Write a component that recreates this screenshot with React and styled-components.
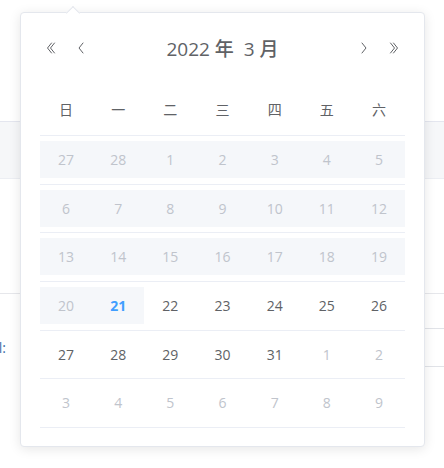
import React from "react";
import styled, { createGlobalStyle } from "styled-components";

const GlobalStyle = createGlobalStyle`
  html, body {
    margin: 0;
    background: #fff;
  }
  body {
    font-family: "Open Sans", "Noto Sans CJK SC", sans-serif;
    color: #606266;
  }
`;

const Page = styled.div`
  position: relative;
  width: 444px;
  height: 468px;
  overflow: hidden;
`;

const TopSpace = styled.div`
  height: 121px;
`;

const TableHead = styled.div`
  height: 56px;
  background: #f6f7f9;
  border-top: 1px solid #e4e6ef;
  border-bottom: 1px solid #eceef3;
`;

const TableBody = styled.div`
  height: 114px;
  border-bottom: 1px solid #e6e7eb;
`;

const FormRow = styled.div`
  display: flex;
  align-items: center;
  margin-top: 34px;
  height: 39px;
`;

const FormLabel = styled.div`
  width: 6px;
  display: flex;
  justify-content: flex-end;
  overflow: hidden;
  white-space: nowrap;
  font-size: 14px;
  color: #3d6fa8;
`;

const FormInput = styled.div`
  flex: 1;
  height: 37px;
  margin-left: 60px;
  margin-right: -10px;
  border: 1px solid #e1e3e8;
  border-radius: 4px;
`;

const Popup = styled.div`
  position: absolute;
  left: 20px;
  top: 12px;
  width: 405px;
  height: 435px;
  box-sizing: border-box;
  padding: 0 19px;
  background: #fff;
  border: 1px solid #e4e7ed;
  border-radius: 4px;
  box-shadow: 0 2px 12px 0 rgba(0, 0, 0, 0.1);

  &::before {
    content: "";
    position: absolute;
    left: 46.5px;
    top: -5.5px;
    width: 9px;
    height: 9px;
    background: #fff;
    border-top: 1px solid #e4e7ed;
    border-left: 1px solid #e4e7ed;
    transform: rotate(45deg);
  }
`;

const Header = styled.div`
  height: 70px;
  display: flex;
  align-items: center;
`;

const NavGroup = styled.div`
  display: flex;
  gap: 8px;
  width: 52px;
`;

const NavButton = styled.button`
  width: 22px;
  height: 22px;
  padding: 0;
  border: 0;
  background: none;
  display: flex;
  align-items: center;
  justify-content: center;
  color: #606266;
  cursor: pointer;
`;

const Title = styled.div`
  flex: 1;
  text-align: center;
  font-size: 19px;
  font-weight: 500;
  color: #606266;
  white-space: pre;
`;

const WeekRow = styled.div`
  display: grid;
  grid-template-columns: repeat(7, 1fr);
  height: 52px;
  align-items: center;
`;

const WeekDay = styled.div`
  text-align: center;
  font-size: 14px;
  font-family: "Noto Sans CJK SC", sans-serif;
  color: #606266;
`;

const DateRow = styled.div`
  display: grid;
  grid-template-columns: repeat(7, 1fr);
  border-top: 1px solid #ebeef5;
  padding: 5px 0 5.67px;

  &:last-child {
    border-bottom: 1px solid #ebeef5;
  }
`;

const Cell = styled.div`
  height: 37px;
  display: flex;
  align-items: center;
  justify-content: center;
  font-size: 14px;
  background: ${(p) => (p.$disabled ? "#f5f7fa" : "transparent")};
  color: ${(p) => (p.$today ? "#409eff" : p.$muted ? "#c0c4cc" : "#606266")};
  font-weight: ${(p) => (p.$today ? 700 : 400)};
`;

const Chevron = ({ dir = "left", double = false }) => {
  const flip = dir === "right" ? "scale(-1,1) translate(-10,0)" : "";
  return (
    <svg width="10" height="12" viewBox="0 0 10 12" fill="none">
      <g transform={flip} stroke="#606266" strokeWidth="1" strokeLinecap="round" strokeLinejoin="round">
        {double ? (
          <>
            <path d="M5.5 1 L1.5 6 L5.5 11" />
            <path d="M8.5 1 L4.5 6 L8.5 11" />
          </>
        ) : (
          <path d="M7 1 L3 6 L7 11" />
        )}
      </g>
    </svg>
  );
};

const weekDays = ["日", "一", "二", "三", "四", "五", "六"];

const buildRows = () => {
  const cells = [];
  [27, 28].forEach((d) => cells.push({ d, muted: true, disabled: true }));
  for (let d = 1; d <= 31; d++) {
    cells.push({ d, muted: d < 21, disabled: d <= 21, today: d === 21 });
  }
  for (let d = 1; d <= 9; d++) cells.push({ d, muted: true });
  const rows = [];
  for (let i = 0; i < 6; i++) rows.push(cells.slice(i * 7, i * 7 + 7));
  return rows;
};

function App() {
  const rows = buildRows();

  return (
    <Page>
      <GlobalStyle />
      <TopSpace />
      <TableHead />
      <TableBody />
      <FormRow>
        <FormLabel>
          <span>Interval:</span>
        </FormLabel>
        <FormInput />
      </FormRow>

      <Popup>
        <Header>
          <NavGroup>
            <NavButton>
              <Chevron double />
            </NavButton>
            <NavButton>
              <Chevron />
            </NavButton>
          </NavGroup>
          <Title>{"2022 年  3 月"}</Title>
          <NavGroup>
            <NavButton>
              <Chevron dir="right" />
            </NavButton>
            <NavButton>
              <Chevron dir="right" double />
            </NavButton>
          </NavGroup>
        </Header>
        <WeekRow>
          {weekDays.map((w) => (
            <WeekDay key={w}>{w}</WeekDay>
          ))}
        </WeekRow>
        {rows.map((row, i) => (
          <DateRow key={i}>
            {row.map((c, j) => (
              <Cell key={j} $muted={c.muted} $disabled={c.disabled} $today={c.today}>
                {c.d}
              </Cell>
            ))}
          </DateRow>
        ))}
      </Popup>
    </Page>
  );
}

export default App;
